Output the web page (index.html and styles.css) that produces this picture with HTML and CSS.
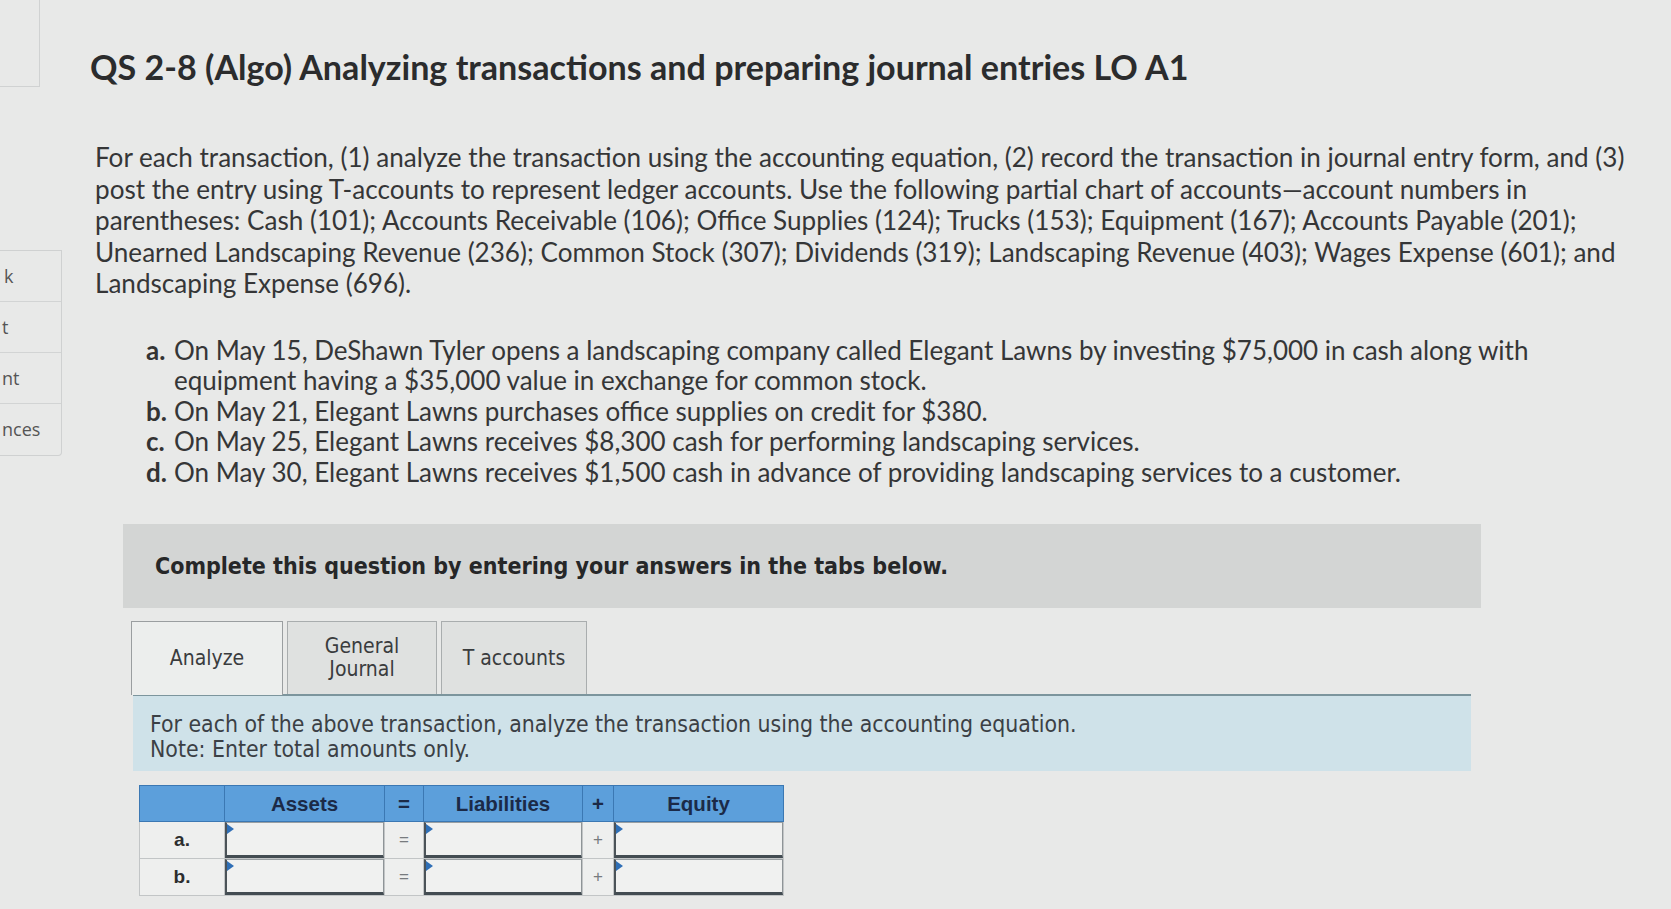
FILE: index.html
```html
<!DOCTYPE html>
<html lang="en">
<head>
<meta charset="utf-8">
<title>QS 2-8 (Algo)</title>
<link rel="stylesheet" href="styles.css">
</head>
<body>
<div class="page">
  <aside class="side">
    <div class="side-top"></div>
    <ul class="side-list">
      <li class="s1">k</li>
      <li>t</li>
      <li>nt</li>
      <li>nces</li>
    </ul>
  </aside>
  <main class="main">
    <h1 class="title">QS 2-8 (Algo) Analyzing transactions and preparing journal entries LO A1</h1>
    <p class="intro">For each transaction, (1) analyze the transaction using the accounting equation, (2) record the transaction in journal entry form, and (3)<br>post the entry using T-accounts to represent ledger accounts. Use the following partial chart of accounts—account numbers in<br>parentheses: Cash (101); Accounts Receivable (106); Office Supplies (124); Trucks (153); Equipment (167); Accounts Payable (201);<br>Unearned Landscaping Revenue (236); Common Stock (307); Dividends (319); Landscaping Revenue (403); Wages Expense (601); and<br>Landscaping Expense (696).</p>
    <ul class="items">
      <li><span class="lbl">a.</span><span>On May 15, DeShawn Tyler opens a landscaping company called Elegant Lawns by investing $75,000 in cash along with<br>equipment having a $35,000 value in exchange for common stock.</span></li>
      <li><span class="lbl">b.</span><span>On May 21, Elegant Lawns purchases office supplies on credit for $380.</span></li>
      <li><span class="lbl">c.</span><span>On May 25, Elegant Lawns receives $8,300 cash for performing landscaping services.</span></li>
      <li><span class="lbl">d.</span><span>On May 30, Elegant Lawns receives $1,500 cash in advance of providing landscaping services to a customer.</span></li>
    </ul>
    <div class="banner">Complete this question by entering your answers in the tabs below.</div>
    <div class="tabs">
      <div class="tab active">Analyze</div>
      <div class="tab">General<br>Journal</div>
      <div class="tab">T accounts</div>
    </div>
    <div class="panel">
      <p>For each of the above transaction, analyze the transaction using the accounting equation.</p>
      <p>Note: Enter total amounts only.</p>
    </div>
    <table class="eq">
      <thead>
        <tr>
          <th class="c-lbl"></th>
          <th class="c-wide">Assets</th>
          <th class="c-op">=</th>
          <th class="c-liab">Liabilities</th>
          <th class="c-op2">+</th>
          <th class="c-eq">Equity</th>
        </tr>
      </thead>
      <tbody>
        <tr>
          <td class="rl">a.</td>
          <td class="in"><div class="box"></div></td>
          <td class="op">=</td>
          <td class="in"><div class="box"></div></td>
          <td class="op">+</td>
          <td class="in"><div class="box"></div></td>
        </tr>
        <tr>
          <td class="rl">b.</td>
          <td class="in"><div class="box"></div></td>
          <td class="op">=</td>
          <td class="in"><div class="box"></div></td>
          <td class="op">+</td>
          <td class="in"><div class="box"></div></td>
        </tr>
      </tbody>
    </table>
  </main>
</div>
</body>
</html>
```
FILE: styles.css
```css
* { box-sizing: border-box; }
html, body { margin: 0; padding: 0; }
body {
  background: #e8e9e8;
  font-family: "Lato", "Liberation Sans", sans-serif;
  color: #2e2f30;
  width: 1671px;
  height: 909px;
  overflow: hidden;
}
.page { display: flex; }

.side { width: 62px; flex: none; }
.side-top {
  width: 40px;
  height: 87px;
  border-right: 1px solid #d0d2d2;
  border-bottom: 1px solid #d0d2d2;
}
.side-list {
  list-style: none;
  margin: 163px 0 0 0;
  padding: 0;
  border: 1px solid #cfd1d1;
  border-left: none;
  border-radius: 0 0 4px 0;
}
.side-list li {
  height: 51px;
  line-height: 50px;
  font-family: "Open Sans", sans-serif;
  font-size: 18px;
  color: #555;
  border-bottom: 1px solid #d2d4d4;
  padding-left: 2px;
}
.side-list li.s1 { padding-left: 4px; }
.side-list li:last-child { border-bottom: none; }

.main { padding-left: 28px; flex: 1; }

.title {
  margin: 47px 0 0 0;
  font-size: 34.1px;
  line-height: 40px;
  font-weight: 700;
  color: #2b2c2d;
}
.intro {
  margin: 55px 0 0 5px;
  font-size: 26.1px;
  line-height: 31.5px;
  color: #353637;
}
.items {
  list-style: none;
  margin: 35px 0 0 56px;
  padding: 0;
  font-size: 26px;
  line-height: 30.5px;
  color: #353637;
}
.items li { display: flex; }
.items .lbl { width: 28px; flex: none; font-weight: 700; color: #333; }

.banner {
  margin: 37px 0 0 33px;
  width: 1358px;
  height: 84px;
  background: #d3d5d4;
  padding-left: 32px;
  display: flex;
  align-items: center;
  font-family: "DejaVu Sans Condensed", "DejaVu Sans", sans-serif;
  font-weight: 700;
  font-size: 23px;
  color: #262728;
}

.tabs {
  display: flex;
  gap: 4px;
  margin: 13px 0 0 41px;
  height: 73px;
}
.tab {
  width: 150px;
  height: 73px;
  border: 1px solid #a9adae;
  border-bottom: none;
  background: #dfe1e0;
  display: flex;
  align-items: center;
  justify-content: center;
  text-align: center;
  font-family: "DejaVu Sans Condensed", "DejaVu Sans", sans-serif;
  font-size: 21px;
  line-height: 23px;
  color: #3a3c3e;
}
.tab.active { width: 152px; background: #eceeed; height: 74px; border-color: #9a9ea0; }
.tab:last-child { width: 146px; }

.panel {
  margin: 0 0 0 43px;
  width: 1338px;
  height: 77px;
  background: #cfe2e9;
  border-top: 2px solid #7c959d;
  padding: 16px 0 0 17px;
  font-family: "DejaVu Sans Condensed", "DejaVu Sans", sans-serif;
  font-size: 22.8px;
  line-height: 24.5px;
  color: #3b4045;
}
.panel p { margin: 0; }

.eq {
  margin: 14px 0 0 49px;
  border-collapse: collapse;
  font-family: "Liberation Sans", Arial, sans-serif;
}
.eq th {
  height: 36px;
  background: #5c9fdb;
  border: 1px solid #3b78b3;
  color: #1b2a47;
  font-size: 20.5px;
  font-weight: 700;
  padding: 0;
}
.c-lbl { width: 85px; }
.c-wide { width: 160px; }
.c-op { width: 39px; }
.c-liab { width: 159px; }
.c-op2 { width: 31px; }
.c-eq { width: 170px; }
.eq td {
  height: 36px;
  background: #eeefee;
  border: 1px solid #c2c5c6;
  padding: 0;
  text-align: center;
}
.eq td.rl { font-size: 19px; font-weight: 700; color: #2c2d2e; }
.eq td.op { font-size: 17px; color: #777b7e; }
.eq td.in { position: relative; padding: 0; }
.box {
  height: 36px;
  background: #f0f1f0;
  border-left: 2px solid #4b5358;
  border-top: 1px solid #9aa0a3;
  border-right: 1px solid #8e9497;
  border-bottom: 3px solid #434c52;
  position: relative;
}
.box::before {
  content: "";
  position: absolute;
  left: 0;
  top: 1px;
  border-top: 5px solid transparent;
  border-bottom: 5px solid transparent;
  border-left: 7px solid #2f6fb6;
}
```
